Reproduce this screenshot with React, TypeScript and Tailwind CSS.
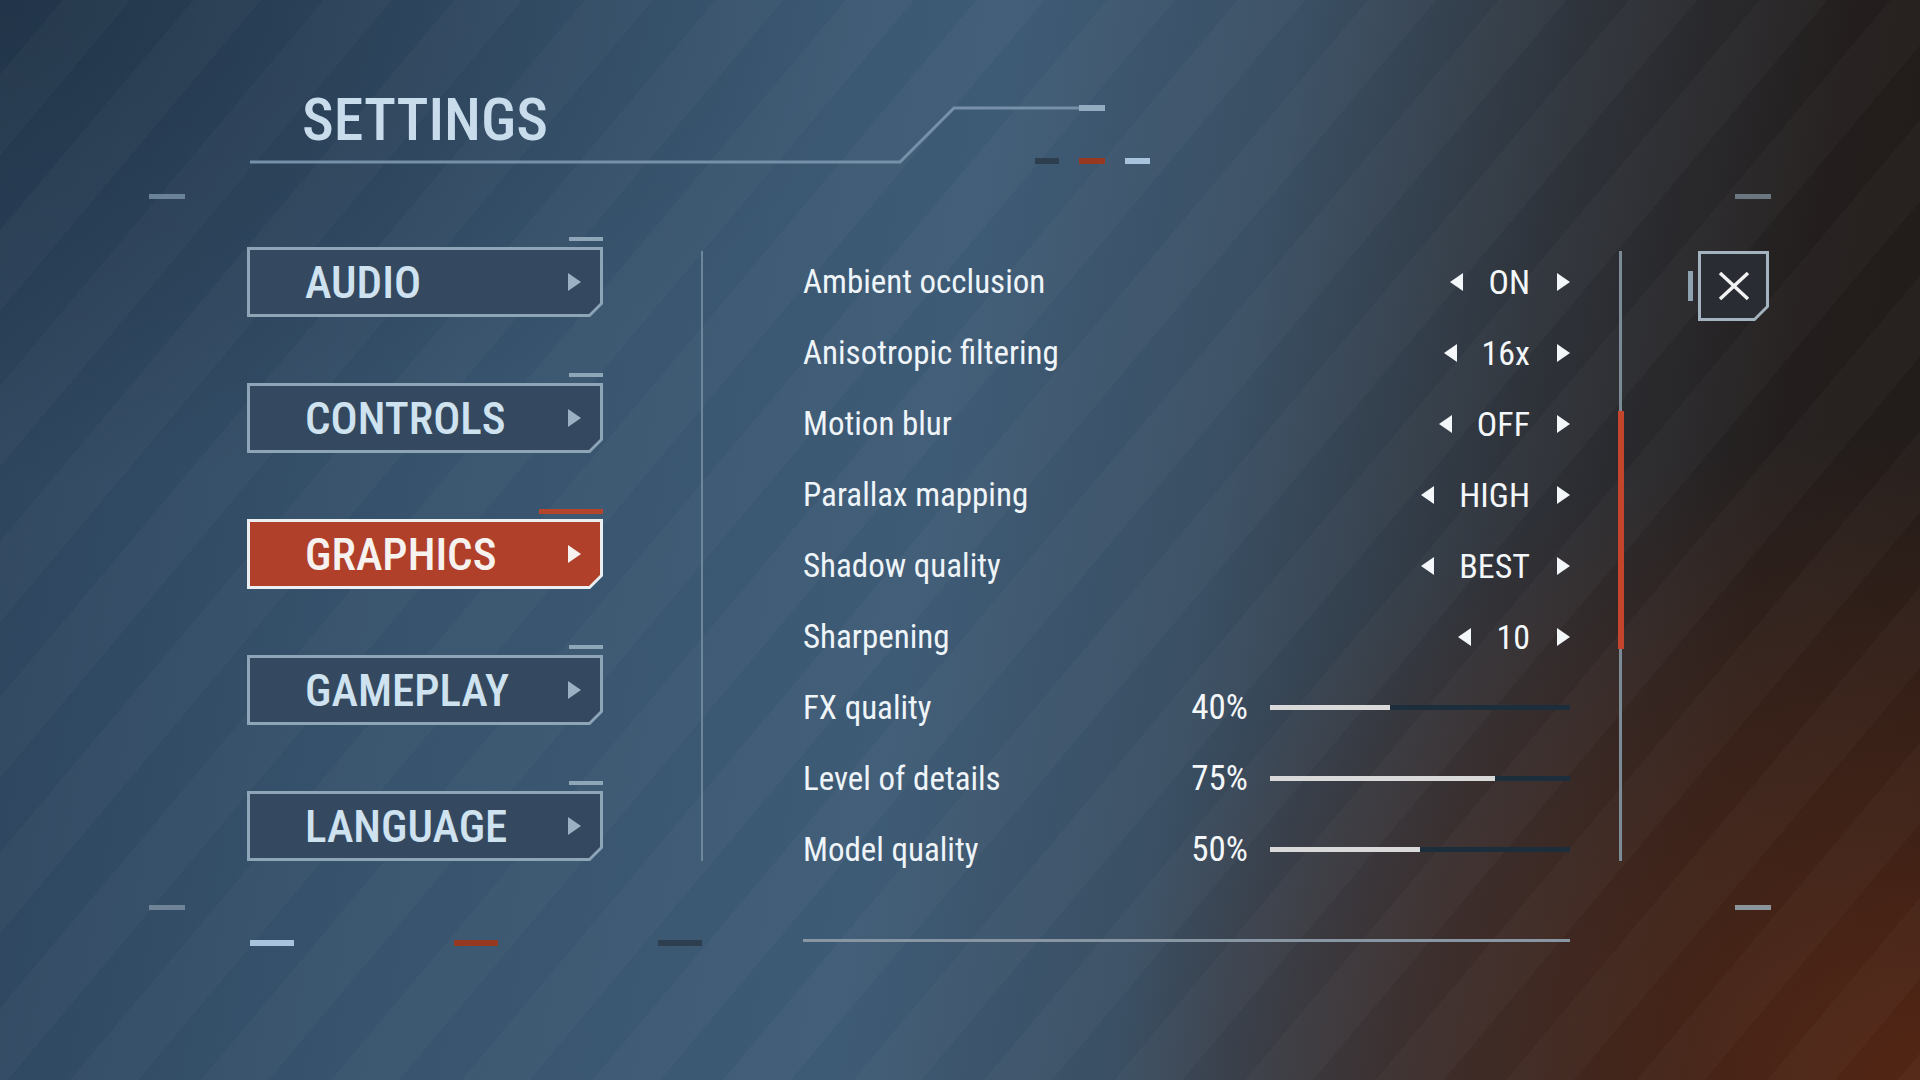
import { ReactNode } from "react";

type Option = { label: string; value: string };
type Slider = { label: string; percent: number };

const menu = ["AUDIO", "CONTROLS", "GRAPHICS", "GAMEPLAY", "LANGUAGE"];
const active = "GRAPHICS";

const options: Option[] = [
    { label: "Ambient occlusion", value: "ON" },
    { label: "Anisotropic filtering", value: "16x" },
    { label: "Motion blur", value: "OFF" },
    { label: "Parallax mapping", value: "HIGH" },
    { label: "Shadow quality", value: "BEST" },
    { label: "Sharpening", value: "10" },
];

const sliders: Slider[] = [
    { label: "FX quality", percent: 40 },
    { label: "Level of details", percent: 75 },
    { label: "Model quality", percent: 50 },
];

const font = "font-['Roboto_Condensed','Liberation_Sans_Narrow','DejaVu_Sans_Condensed',sans-serif]";

const Arrow = ({ dir, className }: { dir: "left" | "right"; className?: string }) => (
    <svg width="13" height="18" viewBox="0 0 13 18" className={className}>
        {dir === "right" ? <polygon points="0,0 13,9 0,18" fill="currentColor" /> : <polygon points="13,0 0,9 13,18" fill="currentColor" />}
    </svg>
);

const MenuButton = ({ label }: { label: string }) => {
    const isActive = label === active;
    return (
        <div className="flex flex-col items-end">
            {isActive ? (
                <div className="w-[64px] h-[5px] mb-[5px] bg-[#b5442c]" />
            ) : (
                <div className="w-[34px] h-[4px] mb-[6px] bg-[#8fa6b8]" />
            )}
            <div className={`w-full h-[70px] p-[3px] [clip-path:polygon(0_0,100%_0,100%_calc(100%-13px),calc(100%-13px)_100%,0_100%)] ${isActive ? "bg-[#eceff1]" : "bg-[#8ea5b8]"}`}>
                <div className={`h-full flex items-center justify-between pl-[55px] pr-[19px] [clip-path:polygon(0_0,100%_0,100%_calc(100%-11px),calc(100%-11px)_100%,0_100%)] ${isActive ? "bg-[#b0402a]" : "bg-[#34495f]"}`}>
                    <span className={`text-[45px] leading-none font-medium ${isActive ? "text-[#f6f2f0]" : "text-[#cfe2f0]"}`}>{label}</span>
                    <Arrow dir="right" className={isActive ? "text-[#f6f2f0]" : "text-[#9bb0c2]"} />
                </div>
            </div>
        </div>
    );
};

const Row = ({ label, children }: { label: string; children: ReactNode }) => (
    <div className="h-[71px] flex items-center justify-between">
        <span className="text-[33px] leading-none text-[#eef4f8]">{label}</span>
        {children}
    </div>
);

const Mark = ({ className }: { className: string }) => <div className={`w-[36px] h-[5px] ${className}`} />;

export default function App() {
    return (
        <div
            className={`w-[1920px] h-[1080px] overflow-hidden flex flex-col ${font} bg-[image:repeating-linear-gradient(130deg,transparent_0px,transparent_48px,rgba(255,255,255,0.025)_48px,rgba(255,255,255,0.025)_100px),radial-gradient(ellipse_42%_60%_at_100%_100%,rgba(92,40,20,0.85),transparent),radial-gradient(ellipse_45%_45%_at_0%_0%,rgba(20,34,50,0.45),transparent),linear-gradient(100deg,#2c435b_0%,#37536d_25%,#3e5b76_48%,#3a4f63_62%,#2e3239_76%,#231e1d_88%,#211a17_100%)]`}
        >
            {/* title with the bent underline */}
            <header className="relative ml-[250px] mt-[70px] w-[920px] h-[100px] shrink-0">
                <svg width="920" height="100" viewBox="0 0 920 100" className="absolute inset-0">
                    <polyline points="0,92 650,92 704,38 829,38" fill="none" stroke="#7590a8" strokeWidth="3" />
                    <rect x="829" y="35" width="26" height="6" fill="#94acbf" />
                    <rect x="785" y="88" width="24" height="6" fill="#2d3f4e" />
                    <rect x="829" y="88" width="26" height="6" fill="#973821" />
                    <rect x="875" y="88" width="25" height="6" fill="#a7c3dd" />
                </svg>
                <h1 className="relative pl-[52px] pt-[20px] text-[60px] leading-none font-medium text-[#c8dcec]">SETTINGS</h1>
            </header>

            <div className="ml-[149px] w-[1622px] mt-[24px] flex flex-col">
                <div className="flex justify-between">
                    <Mark className="bg-[#6a8398]" />
                    <Mark className="bg-[#6b7780]" />
                </div>

                <div className="flex items-start mt-[38px]">
                    <nav className="ml-[98px] w-[356px] flex flex-col gap-[56px]">
                        {menu.map((m) => (
                            <MenuButton key={m} label={m} />
                        ))}
                    </nav>

                    <div className="ml-[98px] mt-[14px] w-[2px] h-[610px] bg-[#6e869a]" />

                    <div className="ml-[100px] mt-[9px] w-[767px] flex flex-col">
                        {options.map((o) => (
                            <Row key={o.label} label={o.label}>
                                <div className="flex items-center text-[#f4f7fa]">
                                    <Arrow dir="left" />
                                    <span className="ml-[25px] mr-[27px] text-[34px] leading-none">{o.value}</span>
                                    <Arrow dir="right" />
                                </div>
                            </Row>
                        ))}
                        {sliders.map((s) => (
                            <Row key={s.label} label={s.label}>
                                <div className="flex items-center">
                                    <span className="text-[35px] leading-none text-[#f4f7fa]">{s.percent}%</span>
                                    <div className="ml-[22px] w-[300px] h-[5px] bg-[#1c2e3b] flex">
                                        <div className="h-full bg-[#d9d9d9]" style={{ width: `${s.percent}%` }} />
                                    </div>
                                </div>
                            </Row>
                        ))}
                    </div>

                    {/* scroll track */}
                    <div className="ml-[47px] mt-[14px] w-[7px] h-[610px] flex flex-col items-center">
                        <div className="w-[3px] h-[160px] bg-[#7c8c97]" />
                        <div className="w-[6px] h-[238px] bg-[#c4452b]" />
                        <div className="w-[3px] flex-1 bg-[#7c8c97]" />
                    </div>

                    <div className="ml-[64px] mt-[14px] flex items-center">
                        <div className="w-[5px] h-[30px] bg-[#8fa2b0]" />
                        <button className="ml-[5px] w-[71px] h-[70px] p-[3px] bg-[#a3b4c0] [clip-path:polygon(0_0,100%_0,100%_calc(100%-14px),calc(100%-14px)_100%,0_100%)]">
                            <div className="w-full h-full flex items-center justify-center bg-[#2a2c34] [clip-path:polygon(0_0,100%_0,100%_calc(100%-12px),calc(100%-12px)_100%,0_100%)]">
                                <svg width="34" height="30" viewBox="0 0 34 30">
                                    <path d="M3 2 L31 28 M31 2 L3 28" stroke="#f2f2f2" strokeWidth="3.5" />
                                </svg>
                            </div>
                        </button>
                    </div>
                </div>

                <div className="flex justify-between mt-[20px]">
                    <Mark className="bg-[#6f8497]" />
                    <Mark className="bg-[#8a959b]" />
                </div>

                <div className="flex items-start mt-[29px]">
                    <div className="ml-[101px] mt-[1px] w-[44px] h-[6px] bg-[#a7c3dd]" />
                    <div className="ml-[160px] mt-[1px] w-[44px] h-[6px] bg-[#973821]" />
                    <div className="ml-[160px] mt-[1px] w-[44px] h-[6px] bg-[#2d3f4e]" />
                    <div className="ml-[101px] w-[767px] h-[3px] bg-[#8796a2]" />
                </div>
            </div>
        </div>
    );
}
